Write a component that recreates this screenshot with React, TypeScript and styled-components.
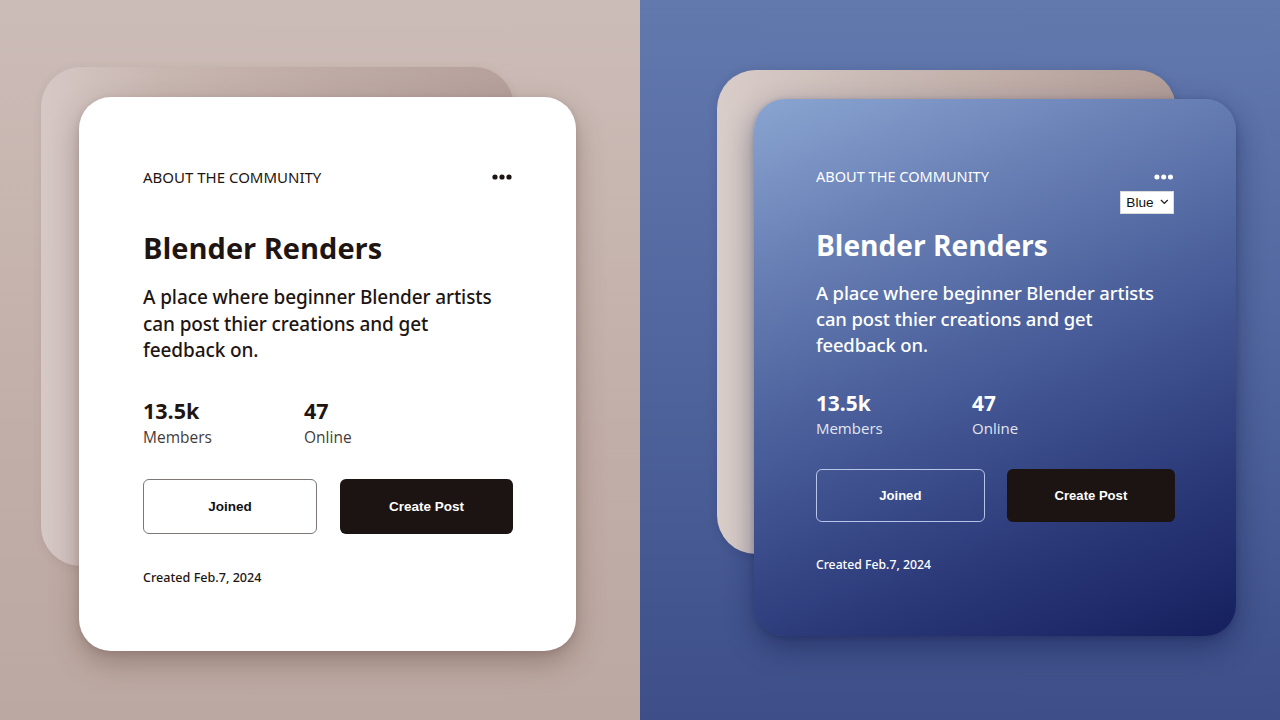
import styled, { createGlobalStyle } from 'styled-components';

type Variant = 'light' | 'blue';

const GlobalStyle = createGlobalStyle`
    html, body {
        margin: 0;
        padding: 0;
        width: 1280px;
        height: 720px;
        overflow: hidden;
    }
    body {
        font-family: "Open Sans", "Noto Sans", sans-serif;
    }
`;

const PANEL_BG: Record<Variant, string> = {
    light: 'linear-gradient(180deg, #ccbcb7 0%, #c2aea8 60%, #bca8a2 100%)',
    blue: 'linear-gradient(180deg, #6279ae 0%, #52679f 45%, #3d4e88 100%)'
};

const CARD_BG: Record<Variant, string> = {
    light: '#ffffff',
    blue: 'linear-gradient(158deg, #8aa5d1 0%, #6b82b7 22%, #475c98 50%, #2d3b7b 75%, #151f5e 100%)'
};

const Dots = () => (
    <svg width="20" height="6" viewBox="0 0 20 6">
        <circle cx="3" cy="3" r="2.6" fill="currentColor" />
        <circle cx="10" cy="3" r="2.6" fill="currentColor" />
        <circle cx="17" cy="3" r="2.6" fill="currentColor" />
    </svg>
);

const Chevron = () => (
    <svg width="9" height="6" viewBox="0 0 9 6">
        <path d="M1 1 L4.5 4.5 L8 1" fill="none" stroke="#222" strokeWidth="1.4" />
    </svg>
);

const CommunityCard = ({ variant }: { variant: Variant }) => {
    return (
        <Card $variant={variant}>
            <Header>
                <Eyebrow>ABOUT THE COMMUNITY</Eyebrow>
                <MenuWrap>
                    <Dots />
                    {variant === 'blue' &&
                        <SelectBox>
                            <ThemeSelect defaultValue="blue">
                                <option value="blue">Blue</option>
                                <option value="light">Light</option>
                            </ThemeSelect>
                            <SelectArrow><Chevron /></SelectArrow>
                        </SelectBox>
                    }
                </MenuWrap>
            </Header>
            <Title>Blender Renders</Title>
            <Description>
                A place where beginner Blender artists can post thier creations and get feedback on.
            </Description>
            <Stats>
                <Stat>
                    <StatValue>13.5k</StatValue>
                    <StatLabel>Members</StatLabel>
                </Stat>
                <Stat>
                    <StatValue>47</StatValue>
                    <StatLabel>Online</StatLabel>
                </Stat>
            </Stats>
            <Actions>
                <OutlineButton $variant={variant}>Joined</OutlineButton>
                <SolidButton>Create Post</SolidButton>
            </Actions>
            <Created>Created Feb.7, 2024</Created>
        </Card>
    );
}

const App = () => {
    return (
        <Page>
            <GlobalStyle />
            <Panel $variant="light" $padLeft={41} $padTop={67}>
                <Stack $zoom={1}>
                    <BackCard $variant="light" />
                    <CommunityCard variant="light" />
                </Stack>
            </Panel>
            <Panel $variant="blue" $padLeft={77} $padTop={70}>
                <Stack $zoom={0.97}>
                    <BackCard $variant="blue" />
                    <CommunityCard variant="blue" />
                </Stack>
            </Panel>
        </Page>
    );
}

const Page = styled.div`
    display: grid;
    grid-template-columns: 640px 640px;
    width: 1280px;
    height: 720px;
`;

const Panel = styled.div<{ $variant: Variant; $padLeft: number; $padTop: number }>`
    background: ${props => PANEL_BG[props.$variant]};
    padding: ${props => `${props.$padTop}px 0 0 ${props.$padLeft}px`};
    box-sizing: border-box;
    height: 720px;
    overflow: hidden;
`;

const Stack = styled.div<{ $zoom: number }>`
    display: grid;
    zoom: ${props => props.$zoom};
    width: max-content;

    & > * {
        grid-area: 1 / 1;
    }
`;

const BackCard = styled.div<{ $variant: Variant }>`
    width: 473px;
    height: 499px;
    border-radius: 40px;
    background: ${props => props.$variant === 'light'
        ? 'linear-gradient(90deg, #d6c8c5 0%, #c8b6b1 25%, #bfaba6 60%, #b5a09b 100%)'
        : 'linear-gradient(90deg, #d9cdc9 0%, #cbbcb7 30%, #bfaca6 65%, #b39e98 100%)'};
    box-shadow: ${props => props.$variant === 'light'
        ? '0 2px 10px rgba(90, 60, 55, 0.10)'
        : '0 2px 10px rgba(20, 30, 70, 0.15)'};
`;

const Card = styled.div<{ $variant: Variant }>`
    position: relative;
    margin: 30px 0 0 38px;
    width: 497px;
    height: 554px;
    box-sizing: border-box;
    padding: 70px 64px 0 64px;
    border-radius: 32px;
    background: ${props => CARD_BG[props.$variant]};
    color: ${props => props.$variant === 'light' ? '#1e1513' : '#ffffff'};
    box-shadow: ${props => props.$variant === 'light'
        ? '0 12px 28px rgba(80, 55, 50, 0.35), 0 2px 6px rgba(80, 55, 50, 0.15)'
        : '0 12px 30px rgba(15, 25, 70, 0.45), 0 2px 6px rgba(15, 25, 70, 0.2)'};
    display: flex;
    flex-direction: column;
`;

const Header = styled.div`
    display: flex;
    justify-content: space-between;
    align-items: center;
    height: 20px;
`;

const Eyebrow = styled.span`
    font-family: "Noto Sans", "Open Sans", sans-serif;
    font-size: 15px;
    line-height: 20px;
    font-weight: 400;
`;

const MenuWrap = styled.div`
    position: relative;
    display: flex;
    align-items: center;
    height: 20px;
`;

const SelectBox = styled.div`
    position: absolute;
    top: 24px;
    right: 0;
    width: 56px;
    height: 24px;
`;

const ThemeSelect = styled.select`
    appearance: none;
    width: 100%;
    height: 100%;
    box-sizing: border-box;
    font-family: "Liberation Sans", Arial, sans-serif;
    font-size: 14px;
    color: #111;
    background: #ffffff;
    border: 1px solid #dcdcdc;
    border-radius: 0;
    padding: 0 0 0 6px;
    outline: none;
`;

const SelectArrow = styled.span`
    position: absolute;
    right: 5px;
    top: 9px;
    display: flex;
    pointer-events: none;
`;

const Title = styled.h1`
    margin: 41px 0 0 0;
    font-size: 29px;
    line-height: 40px;
    font-weight: 700;
`;

const Description = styled.p`
    margin: 16px 0 0 0;
    font-family: "Noto Sans", "Open Sans", sans-serif;
    font-size: 19px;
    line-height: 26.5px;
    font-weight: 500;
    letter-spacing: -0.1px;
    max-width: 370px;
`;

const Stats = styled.div`
    display: grid;
    grid-template-columns: 161px 161px;
    margin-top: 33px;
`;

const Stat = styled.div`
    display: flex;
    flex-direction: column;
`;

const StatValue = styled.span`
    font-size: 21.5px;
    line-height: 28px;
    font-weight: 700;
`;

const StatLabel = styled.span`
    font-size: 15.5px;
    line-height: 24px;
    opacity: 0.85;
`;

const Actions = styled.div`
    display: grid;
    grid-template-columns: 174px 173px;
    gap: 23px;
    margin-top: 30px;
`;

const BaseButton = styled.button`
    height: 55px;
    border-radius: 6px;
    font-family: "Liberation Sans", Arial, sans-serif;
    font-size: 13.5px;
    font-weight: 700;
    cursor: pointer;
`;

const OutlineButton = styled(BaseButton)<{ $variant: Variant }>`
    background: ${props => props.$variant === 'light' ? '#ffffff' : 'transparent'};
    color: ${props => props.$variant === 'light' ? '#111111' : '#ffffff'};
    border: 1px solid ${props => props.$variant === 'light' ? '#7d7776' : 'rgba(205, 218, 250, 0.85)'};
`;

const SolidButton = styled(BaseButton)`
    background: #1c1412;
    color: #ffffff;
    border: none;
`;

const Created = styled.span`
    margin-top: 35px;
    font-family: "Noto Sans", "Open Sans", sans-serif;
    font-size: 12.6px;
    line-height: 18px;
    font-weight: 500;
`;

export default App;
